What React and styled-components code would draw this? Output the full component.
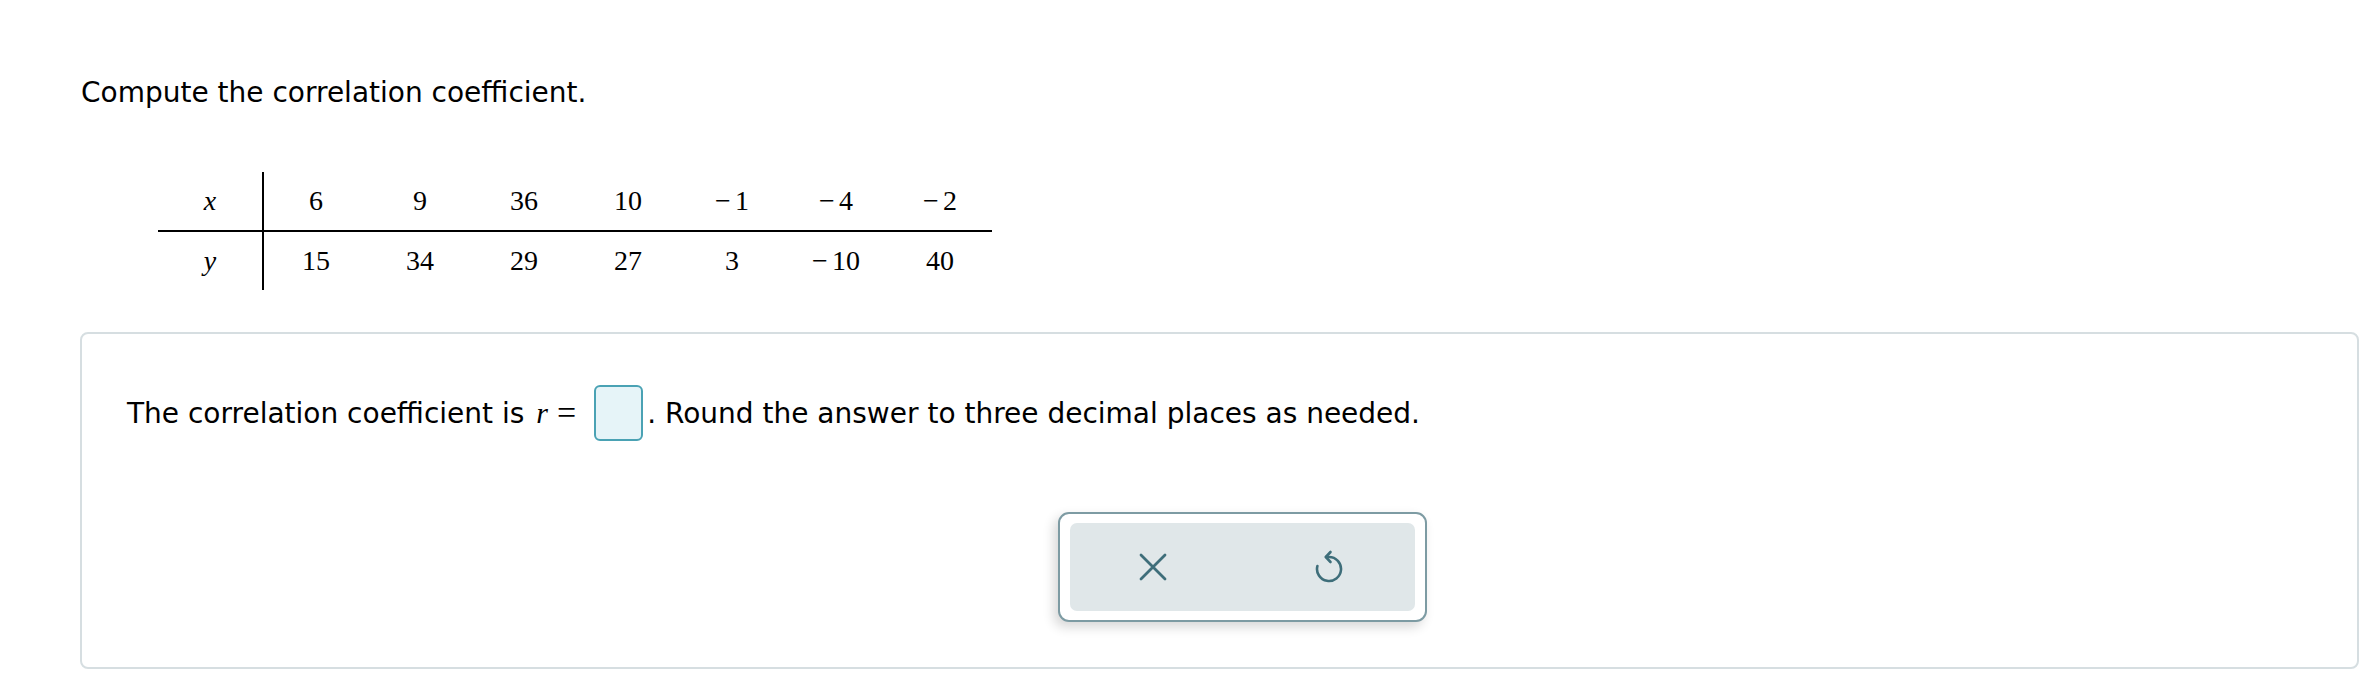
import React from "react";
import styled, { createGlobalStyle } from "styled-components";

const GlobalStyle = createGlobalStyle`
  body {
    margin: 0;
    background: #ffffff;
    font-family: "DejaVu Sans", Verdana, sans-serif;
    color: #000000;
  }
`;

const Page = styled.div`
  padding: 74px 21px 16px 80px;
`;

const Prompt = styled.p`
  margin: 0;
  font-size: 28px;
  line-height: 38px;
  padding-left: 1px;
`;

const DataTable = styled.table`
  border-collapse: collapse;
  margin: 60px 0 0 78px;
  font-family: "Liberation Serif", "Times New Roman", serif;
  font-size: 28px;
`;

const Cell = styled.td`
  width: 104px;
  height: 58px;
  padding: 0;
  text-align: center;
  vertical-align: middle;
  font-style: ${(p) => (p.$label ? "italic" : "normal")};
  border-right: ${(p) => (p.$label ? "2px solid #000" : "none")};
  border-bottom: ${(p) => (p.$top ? "2px solid #000" : "none")};
`;

const Minus = styled.span`
  margin-right: 4px;
`;

const Card = styled.div`
  margin-top: 42px;
  height: 337px;
  border: 2px solid #d6dee1;
  border-radius: 8px;
  padding: 51px 0 0 45px;
  box-sizing: border-box;
`;

const AnswerLine = styled.div`
  display: flex;
  align-items: center;
  font-size: 28px;
  height: 56px;
`;

const MathVar = styled.span`
  font-family: "Liberation Serif", "Times New Roman", serif;
  font-style: italic;
  font-size: 30px;
  margin: 0 9px 0 12px;
`;

const MathOp = styled.span`
  font-family: "Liberation Serif", "Times New Roman", serif;
  font-size: 34px;
  margin-right: 18px;
`;

const AnswerBox = styled.span`
  display: inline-block;
  width: 49px;
  height: 56px;
  box-sizing: border-box;
  border: 2px solid #4aa2b4;
  border-radius: 6px;
  background: #e6f4f8;
  margin-right: 4px;
`;

const ToolGroup = styled.div`
  margin: 71px 0 0 931px;
  width: 369px;
  height: 110px;
  box-sizing: border-box;
  border: 2px solid #7d9ba3;
  border-radius: 11px;
  background: #ffffff;
  padding: 9px 10px;
  box-shadow: -4px 5px 12px rgba(0, 0, 0, 0.16);
`;

const ToolBar = styled.div`
  height: 100%;
  background: #e0e7e9;
  border-radius: 7px;
  display: grid;
  grid-template-columns: 1fr 1fr;
  align-items: center;
  justify-items: center;
`;

const ToolButton = styled.button`
  border: none;
  background: transparent;
  padding: 0;
  display: flex;
  color: #3e6e7a;
  margin: ${(p) => p.$shift};
  cursor: pointer;
`;

function ClearIcon() {
  return (
    <svg width="28" height="28" viewBox="0 0 28 28" fill="none" stroke="currentColor" strokeWidth="2.8" strokeLinecap="round">
      <path d="M2 2 L26 26 M26 2 L2 26" />
    </svg>
  );
}

function ResetIcon() {
  return (
    <svg width="30" height="36" viewBox="0 0 30 36" fill="none" stroke="currentColor" strokeWidth="2.6" strokeLinecap="round" strokeLinejoin="round">
      <path d="M12 10 H15 A12 12 0 1 1 3.4 19" />
      <path d="M16.5 5 L11.8 10 L16.5 15" />
    </svg>
  );
}

const xs = ["6", "9", "36", "10", "-1", "-4", "-2"];
const ys = ["15", "34", "29", "27", "3", "-10", "40"];

function Num({ v }) {
  if (v.startsWith("-")) {
    return (
      <>
        <Minus>−</Minus>
        {v.slice(1)}
      </>
    );
  }
  return v;
}

export default function App() {
  return (
    <>
      <GlobalStyle />
      <Page>
        <Prompt>Compute the correlation coefficient.</Prompt>
        <DataTable>
          <tbody>
            <tr>
              <Cell $label $top>x</Cell>
              {xs.map((v, i) => (
                <Cell key={i} $top>
                  <Num v={v} />
                </Cell>
              ))}
            </tr>
            <tr>
              <Cell $label>y</Cell>
              {ys.map((v, i) => (
                <Cell key={i}>
                  <Num v={v} />
                </Cell>
              ))}
            </tr>
          </tbody>
        </DataTable>
        <Card>
          <AnswerLine>
            The correlation coefficient is
            <MathVar>r</MathVar>
            <MathOp>=</MathOp>
            <AnswerBox />
            . Round the answer to three decimal places as needed.
          </AnswerLine>
          <ToolGroup>
            <ToolBar>
              <ToolButton $shift="0 0 0 -6px" aria-label="Clear">
                <ClearIcon />
              </ToolButton>
              <ToolButton $shift="-4px 0 0 0" aria-label="Reset">
                <ResetIcon />
              </ToolButton>
            </ToolBar>
          </ToolGroup>
        </Card>
      </Page>
    </>
  );
}
